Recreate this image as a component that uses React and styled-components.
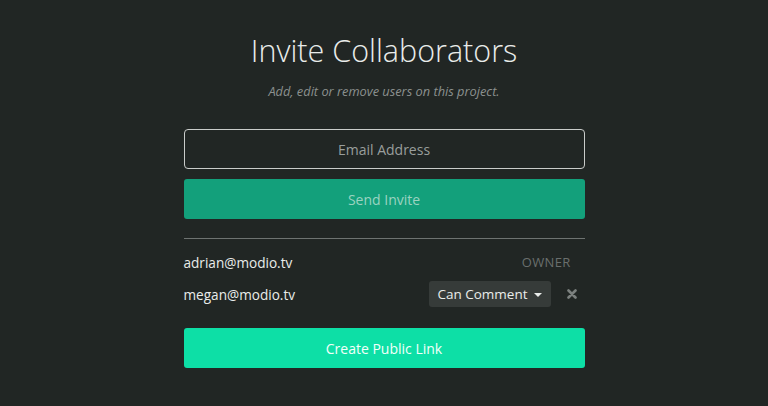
import React, { useState } from 'react'
import styled, { createGlobalStyle } from 'styled-components'

const GlobalStyle = createGlobalStyle`
  html, body {
    margin: 0;
    padding: 0;
    background: #212624;
    font-family: "Open Sans", "DejaVu Sans", sans-serif;
  }
`;

const Container = styled.div`
  width: 768px;
  height: 406px;
  display: flex;
  justify-content: center;
  background: #212624;
  overflow: hidden;
`;

const Panel = styled.div`
  width: 401px;
  padding-top: 30px;
  display: flex;
  flex-direction: column;
`;

const Title = styled.h1`
  margin: 0;
  text-align: center;
  font-size: 30.5px;
  font-weight: 300;
  line-height: 40px;
  color: #e9ecea;
  white-space: nowrap;
`;

const Subtitle = styled.p`
  margin: 12px 0 0;
  text-align: center;
  font-size: 12.8px;
  font-style: italic;
  line-height: 18px;
  color: #8c918f;
`;

const EmailInput = styled.input`
  margin-top: 29px;
  height: 40px;
  box-sizing: border-box;
  border: 1.5px solid #c9ccca;
  border-radius: 4px;
  background: #212624;
  color: #e0e3e1;
  text-align: center;
  font-family: inherit;
  font-size: 14px;
  outline: none;
  &::placeholder {
    color: #999e9c;
  }
`;

const Button = styled.button`
  height: 40px;
  margin-top: ${p => p.$top}px;
  border: none;
  border-radius: 3px;
  background: ${p => p.$bg};
  color: ${p => p.$color};
  font-family: inherit;
  font-size: 14px;
  cursor: pointer;
`;

const Divider = styled.hr`
  margin: 19px 0 0;
  border: none;
  border-top: 1.5px solid #6e7371;
`;

const UserList = styled.div`
  margin-top: 10px;
  display: flex;
  flex-direction: column;
  gap: 6px;
`;

const UserRow = styled.div`
  height: 26px;
  display: flex;
  align-items: center;
  justify-content: space-between;
`;

const Email = styled.span`
  font-size: 13.6px;
  color: #e9ecea;
`;

const Role = styled.span`
  font-size: 13px;
  color: #6a6f6d;
  letter-spacing: 0.3px;
  margin-right: 14px;
`;

const Controls = styled.div`
  display: flex;
  align-items: center;
  gap: 13px;
  margin-right: 8px;
`;

const Dropdown = styled.button`
  height: 26px;
  padding: 0 9px 0 8px;
  display: flex;
  align-items: center;
  gap: 6px;
  border: none;
  border-radius: 3px;
  background: #363b39;
  color: #e9ecea;
  font-family: inherit;
  font-size: 13.5px;
`;

const Caret = styled.span`
  width: 0;
  height: 0;
  border-left: 4px solid transparent;
  border-right: 4px solid transparent;
  border-top: 4px solid #e9ecea;
  margin-top: 2px;
`;

const Remove = styled.button`
  padding: 0;
  margin-left: 3px;
  border: none;
  background: none;
  display: flex;
  cursor: pointer;
`;

const users = [
  { email: 'adrian@modio.tv', owner: true },
  { email: 'megan@modio.tv', role: 'Can Comment' },
];

export default function App() {
  const [email, setEmail] = useState('')
  return (
    <Container>
      <GlobalStyle />
      <Panel>
        <Title>Invite Collaborators</Title>
        <Subtitle>Add, edit or remove users on this project.</Subtitle>
        <EmailInput
          placeholder="Email Address"
          value={email}
          onChange={e => setEmail(e.target.value)}
        />
        <Button $top={10} $bg="#13a07b" $color="#9bd3c1">Send Invite</Button>
        <Divider />
        <UserList>
          {users.map(u => (
            <UserRow key={u.email}>
              <Email>{u.email}</Email>
              {u.owner ? (
                <Role>OWNER</Role>
              ) : (
                <Controls>
                  <Dropdown>
                    {u.role}
                    <Caret />
                  </Dropdown>
                  <Remove aria-label="Remove">
                    <svg width="10" height="10" viewBox="0 0 10 10">
                      <path d="M1.5 1.5 L8.5 8.5 M8.5 1.5 L1.5 8.5" stroke="#7b807e" strokeWidth="2.6" strokeLinecap="round" />
                    </svg>
                  </Remove>
                </Controls>
              )}
            </UserRow>
          ))}
        </UserList>
        <Button $top={21} $bg="#0ddfa6" $color="#f2fffa">Create Public Link</Button>
      </Panel>
    </Container>
  )
}
